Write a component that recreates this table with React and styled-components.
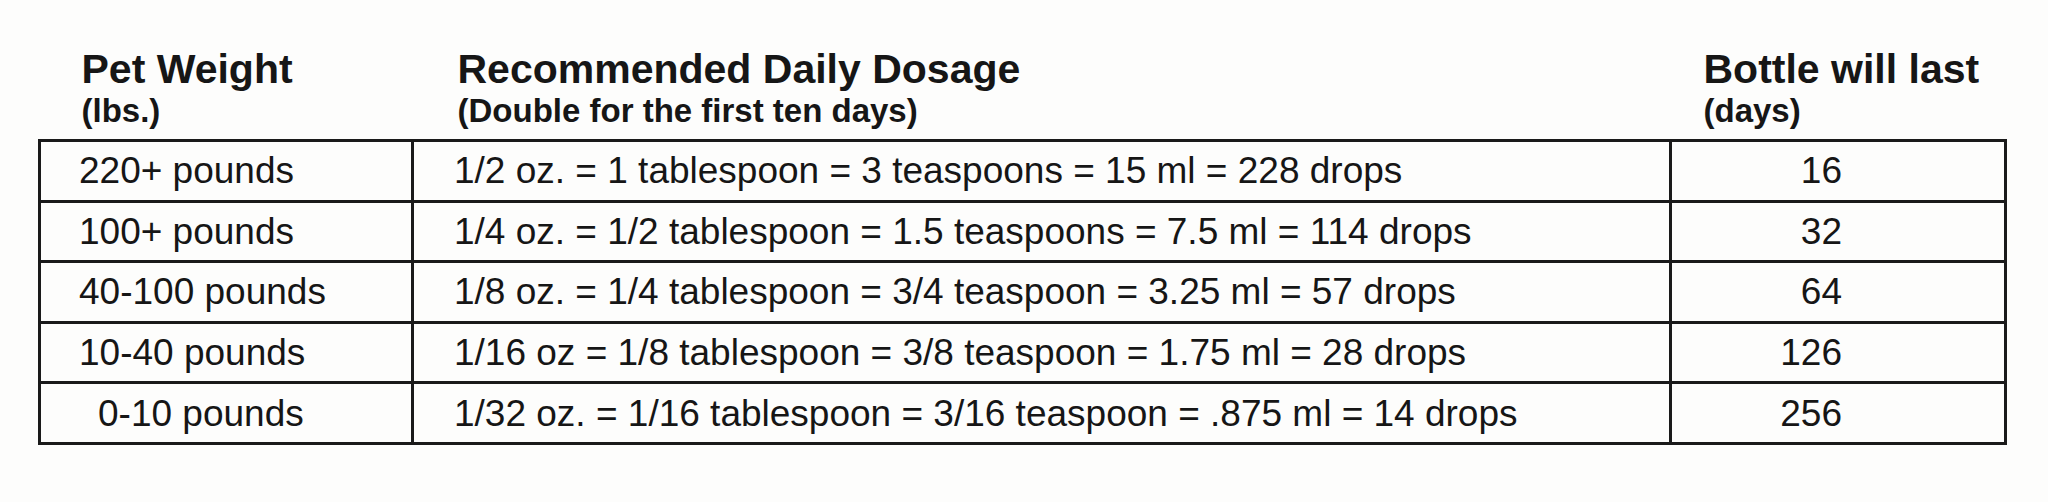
import React from "react";
import styled, { createGlobalStyle } from "styled-components";

const rows = [
  { weight: "220+ pounds", dose: "1/2 oz. = 1 tablespoon = 3 teaspoons = 15 ml = 228 drops", days: "16" },
  { weight: "100+ pounds", dose: "1/4 oz. = 1/2 tablespoon = 1.5 teaspoons = 7.5 ml = 114 drops", days: "32" },
  { weight: "40-100 pounds", dose: "1/8 oz. = 1/4 tablespoon = 3/4 teaspoon = 3.25 ml = 57 drops", days: "64" },
  { weight: "10-40 pounds", dose: "1/16 oz = 1/8 tablespoon = 3/8 teaspoon = 1.75 ml = 28 drops", days: "126" },
  { weight: "0-10 pounds", dose: "1/32 oz. = 1/16 tablespoon = 3/16 teaspoon = .875 ml = 14 drops", days: "256", indent: 57 },
];

export default function App() {
  return (
    <>
      <GlobalStyle />
      <Page>
        <Table>
          <colgroup>
            <col style={{ width: 373 }} />
            <col style={{ width: 1258 }} />
            <col style={{ width: 335 }} />
          </colgroup>
          <thead>
            <tr>
              <Head $pad={42}>
                <Title>Pet Weight</Title>
                <Sub>(lbs.)</Sub>
              </Head>
              <Head $pad={45}>
                <Title>Recommended Daily Dosage</Title>
                <Sub>(Double for the first ten days)</Sub>
              </Head>
              <Head $pad={33}>
                <Title>Bottle will last</Title>
                <Sub>(days)</Sub>
              </Head>
            </tr>
          </thead>
          <tbody>
            {rows.map((r) => (
              <Row key={r.weight}>
                <Cell $pad={r.indent || 38}>{r.weight}</Cell>
                <Cell $pad={40}>{r.dose}</Cell>
                <Days>{r.days}</Days>
              </Row>
            ))}
          </tbody>
        </Table>
      </Page>
    </>
  );
}

const GlobalStyle = createGlobalStyle`
  html, body {
    margin: 0;
    padding: 0;
    background: #fdfdfc;
  }
  body {
    font-family: "Liberation Sans", Arial, sans-serif;
    color: #161616;
  }
`;

const Page = styled.div`
  width: 2048px;
  height: 502px;
  padding: 48px 0 0 38px;
  box-sizing: border-box;
`;

const Table = styled.table`
  border-collapse: collapse;
  table-layout: fixed;
  width: 1966px;
`;

const Head = styled.th`
  text-align: left;
  font-weight: 700;
  padding: 0 0 7px ${(p) => p.$pad}px;
  vertical-align: bottom;
  white-space: nowrap;
`;

const Title = styled.div`
  font-size: 41px;
  line-height: 42px;
`;

const Sub = styled.div`
  font-size: 33px;
  line-height: 42px;
`;

const Row = styled.tr`
  height: 60.6px;
`;

const Cell = styled.td`
  border: 3px solid #1a1a1a;
  padding: 0 0 0 ${(p) => p.$pad}px;
  font-size: 37px;
  line-height: 1;
  white-space: nowrap;
  vertical-align: middle;
`;

const Days = styled(Cell)`
  text-align: right;
  padding: 0 162px 0 0;
`;
